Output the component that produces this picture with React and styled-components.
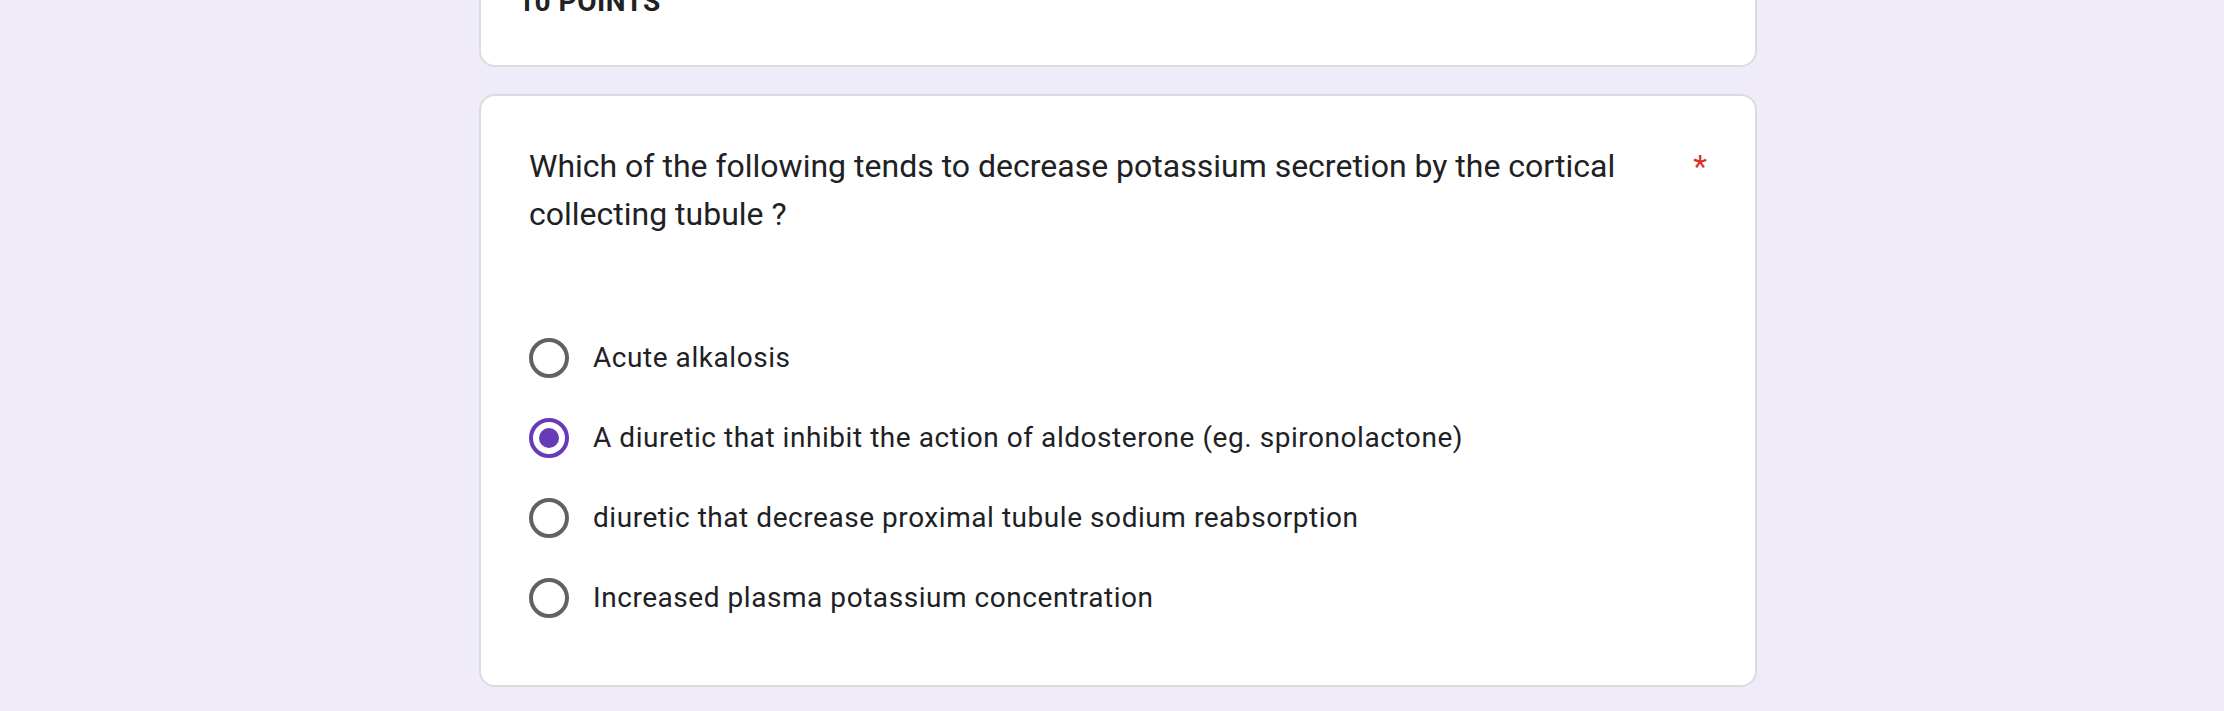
import React, { useState } from "react";
import styled, { createGlobalStyle } from "styled-components";

const GlobalStyle = createGlobalStyle`
  body {
    margin: 0;
    background: #f0ebf8;
    font-family: Roboto, "Liberation Sans", Arial, sans-serif;
    color: #202124;
  }
`;

const options = [
  "Acute alkalosis",
  "A diuretic that inhibit the action of aldosterone (eg. spironolactone)",
  "diuretic that decrease proximal tubule sodium reabsorption",
  "Increased plasma potassium concentration",
];

const App = () => {
  const [picked, setPicked] = useState(1);

  return (
    <>
      <GlobalStyle />
      <Page>
        <Card $top={51} $bottom={49} $side={37}>
          <PointsLabel>10 POINTS</PointsLabel>
        </Card>

        <Card $gap={27} $top={46}>
          <QuestionHeader>
            <QuestionTitle>
              Which of the following tends to decrease potassium secretion by
              the cortical collecting tubule ?
            </QuestionTitle>
            <Required>*</Required>
          </QuestionHeader>

          <OptionList>
            {options.map((text, i) => (
              <OptionRow key={text} onClick={() => setPicked(i)}>
                <Radio $checked={picked === i} />
                <OptionText>{text}</OptionText>
              </OptionRow>
            ))}
          </OptionList>
        </Card>
      </Page>
    </>
  );
};

export default App;

const Page = styled.div`
  display: flex;
  flex-direction: column;
  align-items: center;
  margin-top: -65px;
  padding-left: 12px;
`;

const Card = styled.div`
  box-sizing: border-box;
  width: 1278px;
  margin-top: ${(p) => p.$gap || 0}px;
  padding: ${(p) => p.$top ?? 48}px ${(p) => p.$side ?? 48}px
    ${(p) => p.$bottom ?? 47}px;
  background: #fff;
  border: 2px solid #dadce0;
  border-radius: 16px;
`;

const PointsLabel = styled.div`
  font-size: 28px;
  line-height: 28px;
  font-weight: 700;
  letter-spacing: 0.5px;
  color: #202124;
`;

const QuestionHeader = styled.div`
  display: flex;
  justify-content: space-between;
  align-items: flex-start;
`;

const QuestionTitle = styled.div`
  font-size: 32px;
  line-height: 48px;
  letter-spacing: 0;
  color: #202124;
  max-width: 1150px;
`;

const Required = styled.span`
  font-size: 32px;
  line-height: 48px;
  color: #d93025;
  padding-left: 8px;
`;

const OptionList = styled.div`
  display: flex;
  flex-direction: column;
  margin-top: 80px;
`;

const OptionRow = styled.label`
  display: flex;
  align-items: center;
  gap: 24px;
  height: 80px;
  cursor: pointer;
`;

const Radio = styled.span`
  box-sizing: border-box;
  position: relative;
  flex: none;
  width: 40px;
  height: 40px;
  border-radius: 50%;
  border: 4px solid ${(p) => (p.$checked ? "#673ab7" : "#5f6368")};

  &::after {
    content: "";
    position: absolute;
    left: 6px;
    top: 6px;
    width: 20px;
    height: 20px;
    border-radius: 50%;
    background: #673ab7;
    display: ${(p) => (p.$checked ? "block" : "none")};
  }
`;

const OptionText = styled.span`
  font-size: 28px;
  line-height: 40px;
  letter-spacing: 0.55px;
  color: #202124;
`;
